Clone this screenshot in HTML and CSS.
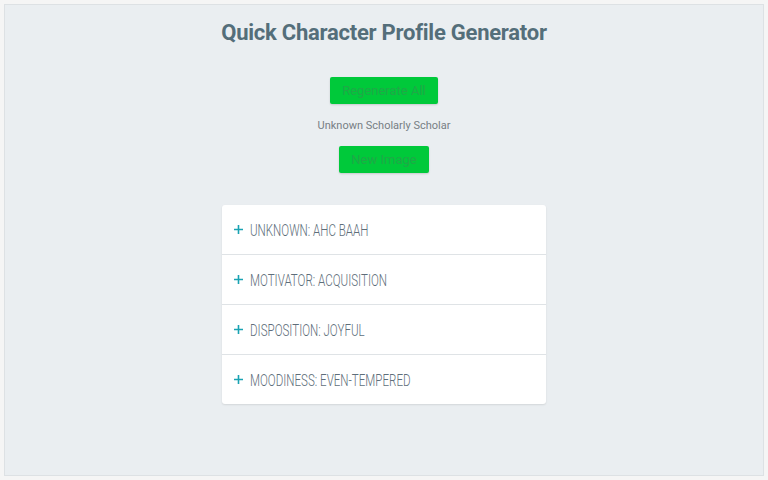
FILE: index.html
```html
<!DOCTYPE html>
<html>
<head>
<meta charset="utf-8">
<link rel="stylesheet" href="styles.css">
</head>
<body>
<div class="app">
  <h1 class="title">Quick Character Profile Generator</h1>
  <div class="controls">
    <button class="btn btn-regen">Regenerate All</button>
    <p class="name">Unknown Scholarly Scholar</p>
    <button class="btn btn-image">New Image</button>
  </div>
  <ul class="card">
    <li class="row"><svg class="plus" width="9" height="9" viewBox="0 0 9 9"><path d="M4.5 0V9M0 4.5H9"/></svg><span class="label">UNKNOWN: AHC BAAH</span></li>
    <li class="row"><svg class="plus" width="9" height="9" viewBox="0 0 9 9"><path d="M4.5 0V9M0 4.5H9"/></svg><span class="label">MOTIVATOR: ACQUISITION</span></li>
    <li class="row"><svg class="plus" width="9" height="9" viewBox="0 0 9 9"><path d="M4.5 0V9M0 4.5H9"/></svg><span class="label">DISPOSITION: JOYFUL</span></li>
    <li class="row"><svg class="plus" width="9" height="9" viewBox="0 0 9 9"><path d="M4.5 0V9M0 4.5H9"/></svg><span class="label">MOODINESS: EVEN-TEMPERED</span></li>
  </ul>
</div>
</body>
</html>
```
FILE: styles.css
```css
html, body { margin: 0; padding: 0; }
body {
  background: #f5f5f5;
  padding: 4px;
  height: 480px;
  box-sizing: border-box;
  font-family: Roboto, "Liberation Sans", sans-serif;
}
.app {
  height: 472px;
  box-sizing: border-box;
  background: #eaeef1;
  border: 1px solid #dde1e4;
  display: flex;
  flex-direction: column;
  align-items: center;
}
.title {
  margin: 15px 0 0;
  font-size: 22px;
  font-weight: 700;
  color: #546e7a;
  line-height: 26px;
  letter-spacing: -0.25px;
}
.controls {
  margin-top: 31px;
  display: flex;
  flex-direction: column;
  align-items: center;
}
.btn {
  border: 0;
  border-radius: 2px;
  background: #00c93a;
  color: #1fa847;
  font-family: Roboto, sans-serif;
  font-size: 13px;
  font-weight: 400;
  height: 27px;
  padding: 0 12px;
  box-shadow: 0 1px 2px rgba(0,0,0,0.15);
}
.name {
  margin: 14px 0 12px;
  font-size: 11px;
  color: #777e84;
  line-height: 16px;
}
.card {
  list-style: none;
  margin: 32px 0 0;
  padding: 0;
  width: 324px;
  background: #fff;
  border-radius: 3px;
  box-shadow: 0 1px 2px rgba(0,0,0,0.1);
}
.row {
  height: 50px;
  display: flex;
  align-items: center;
  padding-left: 12px;
  border-top: 1px solid #dfe3e6;
  box-sizing: border-box;
}
.row:first-child { border-top: 0; height: 49px; }
.plus {
  stroke: #1aa3b3;
  stroke-width: 1.6;
  fill: none;
  margin-right: 7px;
  flex: none;
}
.label {
  font-family: Roboto, sans-serif;
  font-weight: 300;
  font-size: 17px;
  color: #5e6e7a;
  transform: scaleX(0.68);
  transform-origin: left center;
  display: inline-block;
  white-space: nowrap;
}
```
